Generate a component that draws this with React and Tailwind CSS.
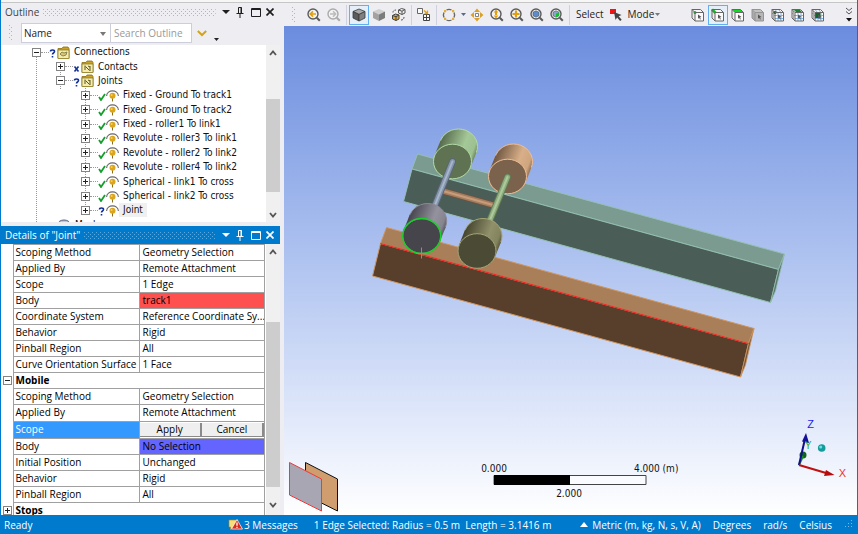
import { useState } from 'react';
import clsx from 'clsx';

const joints = [
  'Fixed - Ground To track1',
  'Fixed - Ground To track2',
  'Fixed - roller1 To link1',
  'Revolute - roller3 To link1',
  'Revolute - roller2 To link2',
  'Revolute - roller4 To link2',
  'Spherical - link1 To cross',
  'Spherical - link2 To cross',
];

const referenceRows = [
  ['Scoping Method', 'Geometry Selection'],
  ['Applied By', 'Remote Attachment'],
  ['Scope', '1 Edge'],
  ['Body', 'track1', 'bg-[#ff5050]'],
  ['Coordinate System', 'Reference Coordinate Sy...'],
  ['Behavior', 'Rigid'],
  ['Pinball Region', 'All'],
  ['Curve Orientation Surface', '1 Face'],
];

const mobileRows = [
  ['Scoping Method', 'Geometry Selection'],
  ['Applied By', 'Remote Attachment'],
  ['Scope', null],
  ['Body', 'No Selection', 'bg-[#6464ff]'],
  ['Initial Position', 'Unchanged'],
  ['Behavior', 'Rigid'],
  ['Pinball Region', 'All'],
];

const Dots = ({ id, color, className }) => (
  <svg className={className} aria-hidden="true">
    <defs>
      <pattern id={id} width="4" height="4" patternUnits="userSpaceOnUse">
        <rect width="1" height="1" fill={color} />
        <rect x="2" y="2" width="1" height="1" fill={color} />
      </pattern>
    </defs>
    <rect width="100%" height="100%" fill={`url(#${id})`} />
  </svg>
);

const PanelTitle = ({ id, title, active }) => (
  <div
    className={clsx(
      'flex h-[18px] shrink-0 items-center pl-1 pr-1',
      active ? 'bg-[#007acc] text-white' : 'bg-[#eeeef2] text-[#444]'
    )}
  >
    <h2 className="text-[10px] leading-4">{title}</h2>
    <Dots
      id={id}
      color={active ? '#59a8de' : '#b4b4bc'}
      className="ml-1 h-[7px] min-w-0 flex-1"
    />
    <button aria-label="Window position" className="ml-1 flex h-4 w-3 items-center justify-center">
      <svg width="8" height="4" viewBox="0 0 8 4" fill={active ? '#fff' : '#1e1e1e'}>
        <path d="M0 0h8L4 4z" />
      </svg>
    </button>
    <button aria-label="Auto hide" className="flex h-4 w-4 items-center justify-center">
      <svg width="8" height="11" viewBox="0 0 8 11" fill="none" stroke={active ? '#fff' : '#1e1e1e'}>
        <path d="M2.5 6V.5h3V6M5 .5V6M.5 6.5h7M4 7v4" />
      </svg>
    </button>
    <button aria-label="Maximize" className="flex h-4 w-4 items-center justify-center">
      <svg width="10" height="9" viewBox="0 0 10 9" fill="none" stroke={active ? '#fff' : '#1e1e1e'}>
        <path d="M.5 .5h9v8h-9zM0 1.5h10" />
      </svg>
    </button>
    <button aria-label="Close" className="flex h-4 w-3 items-center justify-center">
      <svg width="8" height="8" viewBox="0 0 8 8" stroke={active ? '#fff' : '#1e1e1e'} strokeWidth="1.7">
        <path d="M.5 .5l7 7M7.5 .5l-7 7" />
      </svg>
    </button>
  </div>
);

const Chevron = ({ up }) => (
  <svg width="8" height="6" viewBox="0 0 8 6" fill="none" stroke="#555" strokeWidth="1.8">
    <path d={up ? 'M1 5l3-3.5L7 5' : 'M1 1l3 3.5L7 1'} />
  </svg>
);

const Expander = ({ open }) => (
  <svg width="9" height="9" viewBox="0 0 9 9" className="shrink-0">
    <rect x=".5" y=".5" width="8" height="8" fill="#fff" stroke="#848484" />
    <path d={open ? 'M2 4.5h5' : 'M2 4.5h5M4.5 2v5'} stroke="#222" />
  </svg>
);

const StatusMark = ({ state }) => (
  <svg width="8" height="12" viewBox="0 0 8 12" className="shrink-0" fill="none">
    {state === 'ok' && <path d="M1 8l2 3 4-6" stroke="#12a02a" strokeWidth="1.8" />}
    {state === 'x' && <path d="M1.5 5.5l4 5M5.5 5.5l-4 5" stroke="#10309a" strokeWidth="1.6" />}
    {state === '?' && (
      <path d="M1.5 5.500c0-2 4-2 4 0 0 1.500-2 1.500-2 3M3.500 10v1.600" stroke="#10309a" strokeWidth="1.6" />
    )}
  </svg>
);

const FolderIcon = ({ group }) => (
  <svg width="13" height="13" viewBox="0 0 13 13" className="shrink-0">
    <path d="M1 2.500h4l1-1.500h5l1 1.500V12H1z" fill="#c9a227" stroke="#8a6d10" strokeWidth=".8" />
    <rect x="1" y="4" width="11" height="8.5" fill="#f4ecae" stroke="#8f7a22" strokeWidth=".8" />
    {group ? (
      <path d="M3 8l2-2 2 1 3-1-1 3-3 1-2-1z" fill="#d8c878" stroke="#77723d" strokeWidth=".8" />
    ) : (
      <path d="M4 5.500v4.500M4.500 6.500l4 4M9 6v5M7 6l2 1" fill="none" stroke="#5d5620" />
    )}
  </svg>
);

const JointIcon = () => (
  <svg width="13" height="13" viewBox="0 0 13 13" className="shrink-0">
    <path d="M.6 7C1 .2 12 .2 12.400 7" fill="none" stroke="#666" strokeWidth="1.1" />
    <path d="M6.500 9v3.500" stroke="#8a6d20" />
    <circle cx="6.5" cy="6.8" r="3" fill="#dba51c" />
    <circle cx="5.6" cy="5.9" r="1" fill="#f3d069" />
  </svg>
);

const TreeRow = ({ depth, open, state, icon, label, selected }) => (
  <li
    className={clsx(
      'flex min-h-0 items-center',
      depth === 0 && 'pl-[31px]',
      depth === 1 && 'pl-[55px]',
      depth === 2 && 'pl-20'
    )}
  >
    <Expander open={open} />
    <span className="w-2 border-t border-dotted border-[#999]" />
    <StatusMark state={state} />
    {icon}
    <span
      className={clsx(
        'whitespace-nowrap px-1 text-[10px] leading-[14px]',
        selected && 'bg-[#f0f0f0]'
      )}
    >
      {label}
    </span>
  </li>
);

const OutlinePanel = () => {
  const [query, setQuery] = useState('');

  return (
    <section className="flex h-[219px] shrink-0 flex-col">
      <PanelTitle id="outline-dots" title="Outline" />
      <div className="flex h-6 shrink-0 items-center bg-[#eeeef2] pl-2 text-[10px]">
        <Dots id="filter-grip" color="#b4b4bc" className="mr-2 h-4 w-1" />
        <div className="relative h-5 w-[90px] border border-[#cccedb] bg-white">
          <select
            aria-label="Filter by"
            className="h-full w-full appearance-none bg-transparent pl-0.5 text-[#222] outline-none"
          >
            <option>Name</option>
          </select>
          <svg width="6" height="4" viewBox="0 0 6 4" className="pointer-events-none absolute right-1 top-2">
            <path d="M0 0h6L3 4z" fill="#777" />
          </svg>
        </div>
        <input
          aria-label="Search Outline"
          placeholder="Search Outline"
          value={query}
          onChange={(e) => setQuery(e.target.value)}
          className="h-5 w-[81px] border border-l-0 border-[#cccedb] bg-white pl-[3px] text-[10px] placeholder:text-[#999] outline-none"
        />
        <button aria-label="Search" className="ml-0.5 flex h-5 w-4 items-center justify-center">
          <svg width="10" height="7" viewBox="0 0 10 7" fill="none" stroke="#d3a21e" strokeWidth="2">
            <path d="M.8 1L5 5l4.200-4" />
          </svg>
        </button>
        <button aria-label="Filter options" className="flex h-5 w-3 items-end justify-center pb-0.5">
          <svg width="5" height="3" viewBox="0 0 5 3">
            <path d="M0 0h5L2.500 3z" fill="#222" />
          </svg>
        </button>
      </div>
      <div className="flex min-h-0 flex-1 bg-white">
        <div className="relative min-w-0 flex-1 overflow-hidden font-['DejaVu_Sans_Condensed','DejaVu_Sans',sans-serif]">
          <span className="absolute left-[35px] top-3 h-full border-l border-dotted border-[#999]" />
          <span className="absolute left-[59px] top-5 h-6 border-l border-dotted border-[#999]" />
          <span className="absolute left-[84px] top-10 h-32 border-l border-dotted border-[#999]" />
          <ul className="relative grid h-[187px] auto-rows-fr text-[#111]">
            <TreeRow depth={0} open state="?" icon={<FolderIcon group />} label="Connections" />
            <TreeRow depth={1} state="x" icon={<FolderIcon />} label="Contacts" />
            <TreeRow depth={1} open state="?" icon={<FolderIcon />} label="Joints" />
            {joints.map((name) => (
              <TreeRow key={name} depth={2} state="ok" icon={<JointIcon />} label={name} />
            ))}
            <TreeRow depth={2} state="?" icon={<JointIcon />} label="Joint" selected />
            <li className="flex min-h-0 items-center pl-14 text-[10px] leading-[14px]">
              <svg width="14" height="12" viewBox="0 0 14 12" className="mr-1">
                <ellipse cx="7" cy="5" rx="6" ry="4" fill="#bcc6dd" stroke="#56617c" />
              </svg>
              Mesh
            </li>
          </ul>
        </div>
        <div className="flex w-[14px] flex-col items-center bg-[#f0f0f0]">
          <div className="flex h-4 items-center"><Chevron up /></div>
          <div className="h-[38px]" />
          <div className="w-full flex-1 bg-[#cdcdcd]" />
          <div className="h-4" />
          <div className="flex h-[14px] items-center"><Chevron /></div>
        </div>
      </div>
    </section>
  );
};

const DetailRow = ({ label, value, fill }) => (
  <tr>
    <td className="border-r border-[#a0a0a0] bg-white" />
    <th
      scope="row"
      className={clsx(
        'overflow-hidden whitespace-nowrap border border-[#a0a0a0] p-0 pl-0.5 text-left font-normal',
        value === null && 'bg-[#3399ff] text-white'
      )}
    >
      {label}
    </th>
    <td className={clsx('overflow-hidden whitespace-nowrap border border-[#a0a0a0] p-0', fill)}>
      {value === null ? (
        <div className="grid grid-cols-2 text-center leading-[13px]">
          <button className="border-b border-r-2 border-[#8a8a8a] bg-[#efefef]">Apply</button>
          <button className="border-b border-r-2 border-[#8a8a8a] bg-[#efefef]">Cancel</button>
        </div>
      ) : (
        <span className="pl-[3px]">{value}</span>
      )}
    </td>
  </tr>
);

const SectionRow = ({ label, open }) => (
  <tr>
    <td className="p-0 pl-0.5"><Expander open={open} /></td>
    <th colSpan="2" scope="rowgroup" className="border border-[#a0a0a0] p-0 pl-0.5 text-left font-bold">
      {label}
    </th>
  </tr>
);

const DetailsPanel = () => (
  <section className="mt-1 flex min-h-0 flex-1 flex-col">
    <PanelTitle id="details-dots" title={'Details of "Joint"'} active />
    <div className="flex min-h-0 flex-1 bg-white">
      <div className="min-w-0 flex-1 overflow-hidden">
        <table className="h-[275px] w-full table-fixed border-collapse text-[10px] leading-[13px] text-black">
          <colgroup>
            <col className="w-3" />
            <col className="w-[126px]" />
            <col />
          </colgroup>
          <tbody>
            {referenceRows.map(([label, value, fill]) => (
              <DetailRow key={label} label={label} value={value} fill={fill} />
            ))}
            <SectionRow label="Mobile" open />
            {mobileRows.map(([label, value, fill]) => (
              <DetailRow key={label} label={label} value={value} fill={fill} />
            ))}
            <SectionRow label="Stops" />
          </tbody>
        </table>
      </div>
      <div className="flex w-[15px] flex-col items-center border-l border-white bg-[#f0f0f0]">
        <div className="flex h-4 items-center"><Chevron up /></div>
        <div className="h-[62px]" />
        <div className="w-full flex-1 bg-[#cdcdcd]" />
        <div className="flex h-7 items-center pt-2"><Chevron /></div>
      </div>
    </div>
  </section>
);

const ToolButton = ({ label, pressed, children }) => (
  <button
    aria-label={label}
    className={clsx(
      'flex h-5 w-5 shrink-0 items-center justify-center',
      pressed && 'border border-[#62b0ee] bg-[#e4effa]'
    )}
  >
    <svg width="16" height="16" viewBox="0 0 16 16" fill="none" className="shrink-0">
      {children}
    </svg>
  </button>
);

const Separator = () => <span className="mx-0.5 h-5 w-px shrink-0 bg-[#d0d1dc]" />;

const Lens = ({ color = '#5a5a5a', children }) => (
  <>
    <circle cx="7" cy="7" r="5" fill="#f3f3f3" stroke={color} strokeWidth="1.4" />
    <path d="M10.800 10.800l3 3" stroke={color} strokeWidth="2" />
    {children}
  </>
);

const CubeFrame = ({ top = '#f6f6f6', front = '#fafafa', side = '#ececec', stroke = '#666', children }) => (
  <g strokeLinejoin="round">
    <path d="M5 5.500h8.500v8.500H5z" fill={front} />
    <path d="M2 2.500h8.500l3 3H5z" fill={top} />
    <path d="M2 2.500v8.500l3 3V5.500z" fill={side} />
    {children}
    <path d="M2 2.500h8.500l3 3v8.500H5l-3-3zM5 14V5.500h8.500M5 5.500l-3-3" stroke={stroke} />
    <path d="M8 7.500l3.500 2.500-1.500.3.800 1.900-.8.3-.9-1.900L8 12z" fill="#555" />
  </g>
);

const CubeMesh = () => (
  <path
    d="M5 8.500h8.500M5 11.500h8.500M8 5.500V14M11 5.500V14M3.500 4v8.500M5 2.500l2.500 3M8.500 2.500l2.500 3M2 6l3 3"
    stroke="#7db4ee"
  />
);

const SolidCube = ({ top, left, right, stroke }) => (
  <g strokeLinejoin="round">
    <path d="M2 4.500l6-2.500 6 2.500-6 3z" fill={top} stroke={stroke} strokeWidth=".8" />
    <path d="M2 4.500l6 3V14l-6-3z" fill={left} stroke={stroke} strokeWidth=".8" />
    <path d="M14 4.500L8 7.500V14l6-3z" fill={right} stroke={stroke} strokeWidth=".8" />
  </g>
);

const Toolbar = () => (
  <div className="flex h-[23px] shrink-0 items-center bg-[#eeeef2] text-[10px] text-[#222]">
    <Dots id="toolbar-grip" color="#b4b4bc" className="ml-2 mr-2 h-4 w-1" />
    <ToolButton label="Previous view">
      <Lens><path d="M10 7H4.500M7 4.300L4.300 7 7 9.700" stroke="#e0a010" strokeWidth="1.7" /></Lens>
    </ToolButton>
    <ToolButton label="Next view">
      <Lens color="#aaa"><path d="M4 7h5.500M7 4.300L9.700 7 7 9.700" stroke="#bbb" strokeWidth="1.5" /></Lens>
    </ToolButton>
    <Separator />
    <ToolButton label="Shaded exterior and edges" pressed>
      <SolidCube top="#a9a9a9" left="#5c5c5c" right="#808080" stroke="#3a3a3a" />
    </ToolButton>
    <ToolButton label="Shaded exterior">
      <SolidCube top="#cfcfcf" left="#a2a2a2" right="#7c7c7c" stroke="none" />
    </ToolButton>
    <ToolButton label="Rescale annotation">
      <path d="M7.500 3l3-1.500 3.500 1v3.500L11 7.500 7.500 6z" fill="#eee" stroke="#555" />
      <path d="M7.500 3l3.500 1.200L14 2.500M11 4.200v3.300" stroke="#555" />
      <path d="M1.500 8.500l3-1.500L8 8v4l-3 1.500-3.500-1.500z" fill="#e0a72a" stroke="#444" />
      <path d="M1.500 8.500L5 9.700 8 8M5 9.700v3.800" stroke="#444" />
      <path d="M2 5.500C2 4 3 3 5 3M10 13c2 0 3-1 3-3" stroke="#555" strokeDasharray="2 1" />
    </ToolButton>
    <Separator />
    <ToolButton label="Explode">
      <path d="M1.500 1.500h5v5h-5z" fill="#fafafa" stroke="#666" />
      <path d="M7.500 7.500h6v6h-6zM10.500 7.500v6M7.500 10.500h6" fill="#fafafa" stroke="#444" />
      <path d="M8 3.500l3 2.500M11.500 3.500V6.500H8.500" stroke="#e0a010" strokeWidth="1.3" />
    </ToolButton>
    <Separator />
    <ToolButton label="Rotate">
      <path
        d="M5.500 3a5.500 5.500 0 0 1 5 0M13 5.500a5.500 5.500 0 0 1 0 5M10.500 13a5.500 5.500 0 0 1-5 0M3 10.500a5.500 5.500 0 0 1 0-5"
        stroke="#666"
        strokeWidth="1.4"
      />
      <path d="M3 3h2.200v2.200H3zM11 3h2.200v2.200H11zM3 10.800h2.200V13H3zM11 10.800h2.200V13H11z" fill="#e3ad3a" />
    </ToolButton>
    <button aria-label="Rotate options" className="flex h-5 w-2 shrink-0 items-center justify-center">
      <svg width="5" height="3" viewBox="0 0 5 3"><path d="M0 0h5L2.500 3z" fill="#5a6a8a" /></svg>
    </button>
    <ToolButton label="Pan">
      <path d="M8 1.500l3 3.500H5zM8 14.500l3-3.500H5zM1.500 8L5 5v6zM14.500 8L11 5v6z" fill="#dca022" />
      <path d="M6.500 6.500h3v3h-3z" fill="#fff" stroke="#666" strokeWidth=".8" />
    </ToolButton>
    <ToolButton label="Zoom">
      <Lens><path d="M7 2.500l2.300 3H4.700zM7 11.500l2.300-3H4.700zM6 5h2v4H6z" fill="#e0a010" /></Lens>
    </ToolButton>
    <ToolButton label="Box zoom">
      <Lens><path d="M7 3.500v7M3.500 7h7" stroke="#e0a010" strokeWidth="2.2" /></Lens>
    </ToolButton>
    <ToolButton label="Zoom to fit">
      <Lens><path d="M4 5.300L7 3.800l3 1.500v3.400L7 10.200 4 8.700z" fill="#5f8cc8" stroke="#456" strokeWidth=".6" /></Lens>
    </ToolButton>
    <ToolButton label="Toggle magnifier">
      <Lens>
        <path d="M4 5.300L7 3.800l3 1.500v3.400L7 10.200 4 8.700z" fill="#8aa6c8" stroke="#456" strokeWidth=".6" />
        <path d="M7 6.500l3-1v3.200l-3 1.500z" fill="#13c22b" />
      </Lens>
    </ToolButton>
    <Separator />
    <button className="ml-1 shrink-0">Select</button>
    <button className="ml-1 flex shrink-0 items-center">
      <svg width="16" height="16" viewBox="0 0 16 16" className="mr-1">
        <path d="M2 2h6v5H2z" fill="#f31212" />
        <path d="M6 5l7.500 3-2.800 1.200 3 3.600-1.600 1.200-3-3.600L7.500 13z" fill="#444" />
      </svg>
      Mode
      <svg width="5" height="3" viewBox="0 0 5 3" className="ml-px"><path d="M0 0h5L2.500 3z" fill="#777" /></svg>
    </button>
    <div className="ml-7 flex shrink-0">
      <ToolButton label="Vertex">
        <CubeFrame><circle cx="5" cy="5.5" r="1.5" fill="#12b52a" /></CubeFrame>
      </ToolButton>
      <ToolButton label="Edge" pressed>
        <CubeFrame><path d="M2 2.500l3.500 3.500" stroke="#0fd022" strokeWidth="3" /></CubeFrame>
      </ToolButton>
      <ToolButton label="Face">
        <CubeFrame top="#0be01c" />
      </ToolButton>
      <ToolButton label="Body">
        <CubeFrame top="#c2c2c2" front="#b6b6b6" side="#aaa" stroke="#949494" />
      </ToolButton>
      <ToolButton label="Node">
        <CubeFrame>
          <CubeMesh />
          <circle cx="5" cy="5.5" r="1.5" fill="#174b22" />
        </CubeFrame>
      </ToolButton>
      <ToolButton label="Element face">
        <CubeFrame>
          <CubeMesh />
          <path d="M4 3h6l2 2H6z" fill="#19852c" />
        </CubeFrame>
      </ToolButton>
      <ToolButton label="Element">
        <CubeFrame>
          <CubeMesh />
          <path d="M5 5.500h5.500v5.500H5z" fill="#17632a" />
        </CubeFrame>
      </ToolButton>
    </div>
    <button aria-label="More tools" className="ml-auto mr-1 flex h-5 w-2 shrink-0 items-center justify-center">
      <svg width="8" height="16" viewBox="0 0 8 16" fill="none">
        <path d="M1 1l3 2.500L7 1M1 4.500L4 7l3-2.500" stroke="#555" />
        <path d="M1 11h6l-3 3.500z" fill="#111" />
      </svg>
    </button>
  </div>
);

// dx/dy is the shift from the front cap to the back cap
const Roller = ({ id, x, y, dx = 6, dy = -15, cap, edge, shades, capStroke = 1 }) => (
  <g>
    <defs>
      <linearGradient id={id} gradientUnits="userSpaceOnUse" x1={x - 15} y1={y - 14} x2={x + 23} y2={y}>
        <stop offset="0" stopColor={shades[0]} />
        <stop offset=".6" stopColor={shades[1]} />
        <stop offset=".85" stopColor={shades[2]} />
        <stop offset="1" stopColor={shades[0]} />
      </linearGradient>
    </defs>
    <ellipse cx={x + dx} cy={y + dy} rx="19" ry="17.5" fill={`url(#${id})`} stroke={edge} />
    <path
      d={`M${x - 18} ${y - 6}l${dx} ${dy}L${x + 18 + dx} ${y + 6 + dy}l${-dx} ${-dy}z`}
      fill={`url(#${id})`}
    />
    <ellipse cx={x} cy={y} rx="19" ry="17.3" fill={cap} stroke={edge} strokeWidth={capStroke} />
  </g>
);

const Rod = ({ x1, y1, x2, y2, dark, mid, light }) => (
  <g strokeLinecap="round">
    <path d={`M${x1} ${y1}L${x2} ${y2}`} stroke={dark} strokeWidth="7" />
    <path d={`M${x1} ${y1}L${x2} ${y2}`} stroke={mid} strokeWidth="5" />
    <path d={`M${x1} ${y1}L${x2} ${y2}`} stroke={light} strokeWidth="2" />
  </g>
);

const Viewport = () => (
  <div className="min-h-0 flex-1 bg-linear-to-b from-[#6b8cde] to-white">
    <svg
      viewBox="284 26 573 489"
      className="block h-full w-full font-['DejaVu_Sans_Condensed','DejaVu_Sans',sans-serif]"
      role="img"
      aria-label="Model view"
    >
      <g strokeLinejoin="round">
        <path d="M417.500 154L784.500 254 778.500 269.500 412 169z" fill="#7b9b90" stroke="#93bfb0" />
        <path d="M412 169L778.500 269.500 770.500 302.500 403.500 201.500z" fill="#4a5e57" stroke="#93bfb0" />
        <path d="M784.500 254L778.500 269.500 770.500 302.500 775.500 291z" fill="#5c756c" stroke="#93bfb0" strokeWidth=".8" />
      </g>
      <Roller id="roller-green" x={452.5} y={161.5} cap="#5f7353" edge="#b3dba6" shades={['#54684a', '#a5c898', '#9cc08f']} />
      <Roller id="roller-tan" x={507.5} y={176.5} cap="#7a624c" edge="#f0be94" shades={['#6e5641', '#d8af88', '#cfa57e']} />
      <Rod x1={443} y1={191} x2={493} y2={205} dark="#6f523d" mid="#a47e61" light="#c79c7b" />
      <Rod x1={452.5} y1={161.5} x2={435} y2={205} dark="#5a6678" mid="#8595ab" light="#a7b6cb" />
      <Rod x1={507.5} y1={177} x2={490} y2={220} dark="#617a53" mid="#8fac7f" light="#abc99b" />
      <g strokeLinejoin="round">
        <path d="M386.500 227.500L754 328.500 748.500 343.500 380.500 243.500z" fill="#a87f58" stroke="#cf955f" />
        <path d="M380.500 243.500L748.500 343.500 740.500 377 372.500 276z" fill="#573f2c" stroke="#cf955f" />
        <path d="M754 328.500L748.500 343.500 740.500 377 745.500 365z" fill="#74543a" stroke="#cf955f" strokeWidth=".8" />
        <path d="M380.500 243.500L748.500 343.500" stroke="#ee2a2a" strokeWidth="1.2" />
      </g>
      <Roller id="roller-grey" x={421.7} y={236} cap="#47454c" edge="#8b8a96" shades={['#45444c', '#93929e', '#86858f']} />
      <ellipse cx="421.7" cy="236" rx="19" ry="17.5" fill="none" stroke="#18d028" strokeWidth="1.4" />
      <Roller id="roller-olive" x={477} y={251} cap="#4a4a35" edge="#a5a576" shades={['#44442f', '#90906a', '#83835d']} />
      <path d="M421.500 247.500v11M416 253.500h11" stroke="#6f8fdc" />

      <path d="M305.500 462.500l32 16.500v32l-32-16z" fill="#cf9d6e" stroke="#111" />
      <path d="M289.500 462.500l32 16.500v32l-32-16z" fill="#a7a6b2" stroke="#f03a3a" />

      <path d="M494 475.500h152v9H494z" fill="#fff" fillOpacity=".5" stroke="#444" />
      <path d="M494 475h76v10h-76z" fill="#000" />
      <g fill="#111" fontSize="10">
        <text x="494" y="472" textAnchor="middle">0.000</text>
        <text x="569" y="497" textAnchor="middle">2.000</text>
        <text x="634" y="472">4.000 (m)</text>
      </g>

      <circle cx="803" cy="455" r="3.5" fill="#12611c" />
      <path d="M799 465l4-9" stroke="#1d8a2a" strokeWidth="2" />
      <path d="M799 465l5.500-24" stroke="#10108c" strokeWidth="2" />
      <path d="M806 433l3 10-7-1.500z" fill="#10109c" />
      <path d="M799 465l27 8" stroke="#c01010" strokeWidth="2" />
      <path d="M834.500 475l-10.500 1 2-6z" fill="#b80c0c" />
      <circle cx="821.7" cy="448" r="3.8" fill="#149c9c" />
      <circle cx="820.7" cy="447" r="1.5" fill="#6fe0dc" />
      <g fontSize="11" textAnchor="middle" className="font-['Liberation_Sans',sans-serif]">
        <text x="810.5" y="428" fill="#2222ee">Z</text>
        <text x="808" y="449" fill="#1fae2f" fontSize="10">Y</text>
        <text x="842.5" y="477" fill="#ee3333">X</text>
      </g>
    </svg>
  </div>
);

const StatusBar = () => (
  <footer className="flex h-[19px] shrink-0 items-center whitespace-nowrap bg-[#007acc] pl-[3px] pr-1 text-[10px] leading-4 text-white">
    <span className="w-56 shrink-0">Ready</span>
    <button className="flex items-center">
      <svg width="15" height="13" viewBox="0 0 15 13" className="mr-px">
        <path d="M1 2h9v7H5l-2.500 3V9H1z" fill="#f8dd7a" stroke="#b08820" strokeWidth=".6" />
        <path d="M9 1.500l5.500 9.500h-11z" fill="#d92a1c" stroke="#fff" strokeWidth=".7" />
        <path d="M9 4.500v3.200M9 8.700V10" stroke="#fff" strokeWidth="1.3" />
      </svg>
      3 Messages
    </button>
    <span className="ml-4 whitespace-pre">1 Edge Selected: Radius = 0.5 m  Length = 3.1416 m</span>
    <div className="ml-auto flex items-center gap-3">
      <button className="flex items-center gap-1">
        <svg width="8" height="5" viewBox="0 0 8 5"><path d="M0 5h8L4 0z" fill="#fff" /></svg>
        Metric (m, kg, N, s, V, A)
      </button>
      <span>Degrees</span>
      <span>rad/s</span>
      <span>Celsius</span>
      <svg width="9" height="9" viewBox="0 0 9 9" fill="#7ab8e4">
        <path d="M7 0h1v1H7zM4 3h1v1H4zM7 3h1v1H7zM1 6h1v1H1zM4 6h1v1H4zM7 6h1v1H7z" />
      </svg>
    </div>
  </footer>
);

const App = () => (
  <div className="flex h-screen flex-col overflow-hidden border-x border-[#007acc] bg-[#eeeef2] font-['Open_Sans','Noto_Sans',sans-serif]">
    <div className="h-[3px] shrink-0 border-b border-[#c6c6c6] bg-[#f6f6f6]" />
    <div className="flex min-h-0 flex-1">
      <aside className="flex w-[279px] shrink-0 flex-col">
        <OutlinePanel />
        <DetailsPanel />
      </aside>
      <main className="ml-1 flex min-w-0 flex-1 flex-col">
        <Toolbar />
        <Viewport />
      </main>
    </div>
    <StatusBar />
  </div>
);

export default App;
